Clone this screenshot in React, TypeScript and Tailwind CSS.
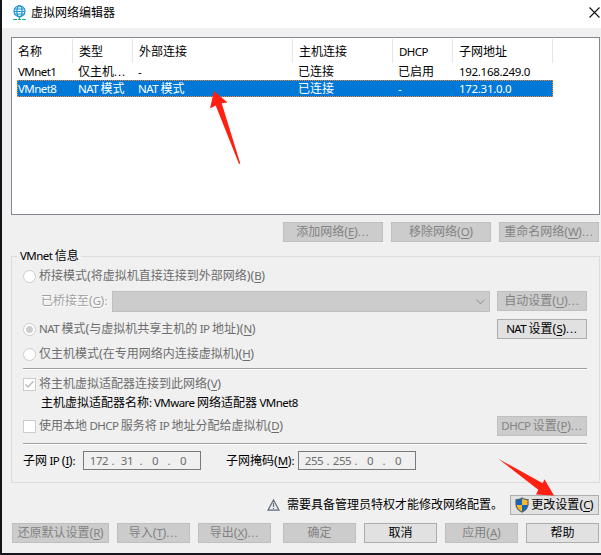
import React from "react";
import clsx from "clsx";

/* Latin text with wider spacing for ellipses and parentheses than for letters. */
function Latin({ text }: { text: string }) {
  const tokens = text.match(/\.\.\.|[()]|(?:(?!\.\.\.)[^()])+/g) ?? [];
  return (
    <>
      {tokens.map((t, i) => {
        if (t === "...") {
          return <span key={i} className="tracking-[0.9px]">{t}</span>;
        }
        if (t === "(" || t === ")") {
          return <span key={i} className="text-[12.5px] tracking-[0px]">{t}</span>;
        }
        return <React.Fragment key={i}>{t}</React.Fragment>;
      })}
    </>
  );
}

/* Mixed-script label: CJK runs at 12px, Latin runs slightly smaller. "_X" underlines X as an access key. */
function Label({ text, className }: { text: string; className?: string }) {
  const runs = text.match(/[\u3000-\u9fff]+|[^\u3000-\u9fff]+/g) ?? [];
  return (
    <span className={clsx("block whitespace-pre text-[12px] leading-[16px]", className)}>
      {runs.map((run, i) => {
        if (/[\u3000-\u9fff]/.test(run)) {
          return <span key={i}>{run}</span>;
        }
        const [before, after] = run.split("_");
        return (
          <span key={i} className="text-[11.5px] tracking-[-0.55px]">
            <Latin text={before} />
            {after !== undefined && (
              <>
                <span className="underline decoration-1 underline-offset-2">{after[0]}</span>
                <Latin text={after.slice(1)} />
              </>
            )}
          </span>
        );
      })}
    </span>
  );
}

function Button({ text, width, disabled, icon }: { text: string; width: string; disabled?: boolean; icon?: React.ReactNode }) {
  return (
    <button
      className={clsx(
        "flex h-5 shrink-0 items-center justify-center border",
        width,
        disabled ? "border-[#bfbfbf] bg-[#cccccc] text-[#838383]" : "border-[#adadad] bg-[#e1e1e1] text-black",
      )}
    >
      {icon}
      <Label text={text} />
    </button>
  );
}

function Radio({ text, checked }: { text: string; checked?: boolean }) {
  return (
    <div className="flex h-5 items-center">
      <span className="mr-[3px] flex size-[13px] items-center justify-center rounded-full border border-[#cccccc] bg-white">
        {checked && <span className="size-[7px] rounded-full bg-[#cccccc]" />}
      </span>
      <Label text={text} className="text-[#6d6d6d]" />
    </div>
  );
}

function Check({ text, checked }: { text: string; checked?: boolean }) {
  return (
    <div className="flex h-5 items-center">
      <span className="mr-[3px] flex size-[13px] items-center justify-center border border-[#cccccc] bg-white">
        {checked && (
          <svg width="11" height="11" viewBox="0 0 11 11" fill="none" stroke="#bcbcbc" strokeWidth="1.5">
            <path d="M1.5 5.5 4 8 9.5 2.2" />
          </svg>
        )}
      </span>
      <Label text={text} className="text-[#6d6d6d]" />
    </div>
  );
}

function IpField({ parts }: { parts: string[] }) {
  return (
    <div className="flex h-[19px] w-[118px] items-center border border-[#7a7a7a] pl-[3px] text-[11.5px] leading-[16px] text-[#6d6d6d]">
      {parts.map((p, i) => (
        <React.Fragment key={i}>
          {i > 0 && <span className="w-[4px] text-center">.</span>}
          <span className="w-6 text-center tracking-[-0.4px]">{p}</span>
        </React.Fragment>
      ))}
    </div>
  );
}

function Rule() {
  return <div className="h-[2px] w-[564px] border-b border-white bg-[#a0a0a0]" />;
}

const columns = [
  { head: "名称", width: "w-[60px]", cells: ["VMnet1", "VMnet8"] },
  { head: "类型", width: "w-[60px]", cells: ["仅主机...", "NAT 模式"] },
  { head: "外部连接", width: "w-[160px]", cells: ["-", "NAT 模式"] },
  { head: "主机连接", width: "w-[100px]", cells: ["已连接", "已连接"] },
  { head: "DHCP", width: "w-[60px]", cells: ["已启用", "-"] },
  { head: "子网地址", width: "w-[100px]", cells: ["192.168.249.0", "172.31.0.0"] },
];

function NetworkTable() {
  return (
    <div className="ml-[9px] h-[178px] w-[589px] border border-[#828790] bg-white pt-px">
      <div className="flex h-[24px]">
        {columns.map((c, i) => (
          <div
            key={c.head}
            className={clsx("flex items-center border-r border-[#e5e5e5] pt-px", i === 0 ? "w-[61px] pl-[6px]" : clsx(c.width, "pl-[6px]"))}
          >
            <Label text={c.head} />
          </div>
        ))}
      </div>
      {[0, 1].map((r) => (
        <div
          key={r}
          className={clsx(
            "ml-[5px] flex w-[536px] items-center",
            r === 1 ? "h-[17px] bg-[#0078d7] text-white outline-1 -outline-offset-1 outline-dotted outline-[#ff8728]" : "h-[17px]",
          )}
        >
          {columns.map((c, i) => (
            <div key={c.head} className={clsx("shrink-0", i === 0 ? "w-[60px] pl-px" : clsx(c.width, "pl-px"))}>
              <Label
                text={c.cells[r]}
                className={i === 5 ? "pl-px [&>span]:tracking-[-0.3px]" : undefined}
              />
            </div>
          ))}
        </div>
      ))}
    </div>
  );
}

function GlobeIcon() {
  return (
    <svg width="16" height="16" viewBox="0 0 16 16" fill="none" stroke="#1b93cf" strokeWidth="1.2">
      <circle cx="7.5" cy="6.3" r="5.5" />
      <ellipse cx="7.5" cy="6.3" rx="2.6" ry="5.5" />
      <path d="M2.5 4h10M2 6.5h11M2.5 9h10" />
      <path d="M7.5 12v2" stroke="#18ad8c" />
      <path d="M1 14.5h4M6 14.5h3M10 14.5h4" stroke="#18ad8c" />
    </svg>
  );
}

function ShieldIcon() {
  return (
    <svg className="mr-[2px]" width="14" height="16" viewBox="0 0 14 16">
      <path d="M7 .3C9 1.8 11 2.2 13.6 2.2V7c0 4.2-2.8 6.8-6.6 8.7C3.200 13.800.4 11.200.4 7V2.200C3 2.200 5 1.800 7 .3Z" fill="#53636c" />
      <path d="M7 1.800V8H1.600V3.300C4 3.200 5.500 2.700 7 1.800Z" fill="#1065bd" />
      <path d="M7 1.800V8h5.400V3.300C10 3.200 8.500 2.700 7 1.800Z" fill="#fcb829" />
      <path d="M7 8H1.700c.3 3 2.300 4.900 5.300 6.400Z" fill="#fcb829" />
      <path d="M7 8h5.300c-.3 3-2.300 4.900-5.300 6.400Z" fill="#1065bd" />
    </svg>
  );
}

export default function App() {
  return (
    <div className="relative h-[555px] w-[601px] overflow-hidden border-b-2 border-l-2 border-[#151519] bg-[#f0f0f0] font-['Noto_Sans','Noto_Sans_CJK_SC',sans-serif] text-black">
      <header className="flex h-7 items-center bg-white pl-[10px] pr-px">
        <div className="pb-[3px]">
          <GlobeIcon />
        </div>
        <span className="ml-[3px] flex-1 pb-[3px] text-[12px] leading-[16px]">虚拟网络编辑器</span>
        <svg className="mb-[3px]" width="11" height="11" viewBox="0 0 11 11" stroke="#111" strokeWidth="1.1">
          <path d="m.5.5 10 10M10.500.5l-10 10" />
        </svg>
      </header>

      <div className="pt-[9px]">
        <NetworkTable />
      </div>

      <div className="mt-[7px] flex justify-end gap-2 pr-[2px]">
        <Button text="添加网络(_E)..." width="w-[100px]" disabled />
        <Button text="移除网络(_O)" width="w-[100px]" disabled />
        <Button text="重命名网络(_W)..." width="w-[100px]" disabled />
      </div>

      <fieldset className="ml-[9px] mt-[6px] h-[235px] w-[589px] border border-[#dcdcdc]">
        <legend className="ml-[6px] px-[2px]">
          <Label text="VMnet 信息" />
        </legend>
        <div className="pl-[11px]">
          <div className="pt-[2px]">
            <Radio text="桥接模式(将虚拟机直接连接到外部网络)(_B)" />
          </div>
          <div className="mt-[5px] flex h-[21px] items-start">
            <Label text="已桥接至(_G):" className="w-[89px] pl-[18px] pt-[2px] text-[#a0a0a0] [text-shadow:1px_1px_0_#fff]" />
            <div className="mr-[7px] flex h-[21px] w-[378px] items-center justify-end border border-[#bfbfbf] bg-[#cccccc] pr-1">
              <svg width="9" height="6" viewBox="0 0 9 6" fill="none" stroke="#a0a0a0" strokeWidth="1.1">
                <path d="m.5.7 4 4 4-4" />
              </svg>
            </div>
            <Button text="自动设置(_U)..." width="w-[90px]" disabled />
          </div>
          <div className="mt-[7px] flex w-[564px] items-start justify-between">
            <Radio text="NAT 模式(与虚拟机共享主机的 IP 地址)(_N)" checked />
            <Button text="NAT 设置(_S)..." width="w-[90px]" />
          </div>
          <div className="mt-[5px]">
            <Radio text="仅主机模式(在专用网络内连接虚拟机)(_H)" />
          </div>
          <div className="mt-[4px]">
            <Rule />
          </div>
          <div className="mt-[4px]">
            <Check text="将主机虚拟适配器连接到此网络(_V)" checked />
          </div>
          <Label text="主机虚拟适配器名称: VMware 网络适配器 VMnet8" className="ml-[18px] mt-px" />
          <div className="mt-[5px] flex w-[564px] justify-between">
            <Check text="使用本地 DHCP 服务将 IP 地址分配给虚拟机(_D)" />
            <Button text="DHCP 设置(_P)..." width="w-[90px]" disabled />
          </div>
          <div className="mt-[7px]">
            <Rule />
          </div>
          <div className="mt-[6px] flex items-center">
            <Label text="子网 IP (_I):" className="w-[60px]" />
            <IpField parts={["172", "31", "0", "0"]} />
            <Label text="子网掩码(_M):" className="ml-[25px] w-[72px]" />
            <IpField parts={["255", "255", "0", "0"]} />
          </div>
        </div>
      </fieldset>

      <div className="mt-3 flex items-center justify-end pr-[2px]">
        <svg className="mr-[7px]" width="13" height="12" viewBox="0 0 13 12" fill="none" stroke="#5d6b78" strokeWidth="1.2">
          <path d="M6.500 1 12 11.200H1ZM6.500 4v4M6.500 9v1" />
        </svg>
        <Label text="需要具备管理员特权才能修改网络配置。" className="mr-[7px]" />
        <Button text="更改设置(_C)" width="w-[89px]" icon={<ShieldIcon />} />
      </div>

      <footer className="mt-2 flex pl-[10px]">
        <div className="flex gap-2">
          <Button text="还原默认设置(_R)" width="w-[97px]" disabled />
          <Button text="导入(_T)..." width="w-[73px]" disabled />
          <Button text="导出(_X)..." width="w-[73px]" disabled />
        </div>
        <div className="ml-3 flex gap-2">
          <Button text="确定" width="w-[73px]" disabled />
          <Button text="取消" width="w-[73px]" />
          <Button text="应用(_A)" width="w-[73px]" disabled />
          <Button text="帮助" width="w-[73px]" />
        </div>
      </footer>

      {/* Red pointer arrows drawn over the dialog */}
      <svg className="pointer-events-none absolute left-[-2px] top-0" width="601" height="555" fill="#ff2012">
        <path d="M214 91 227.500 102.500 221.700 103.300 240.300 163.500 239 164 215.700 105.500 210 108.500Z" />
        <path d="M498.300 458.700 542.700 483.300 544.500 479.300 554 495.500 536 494.500 538.300 489.700Z" />
      </svg>
    </div>
  );
}
